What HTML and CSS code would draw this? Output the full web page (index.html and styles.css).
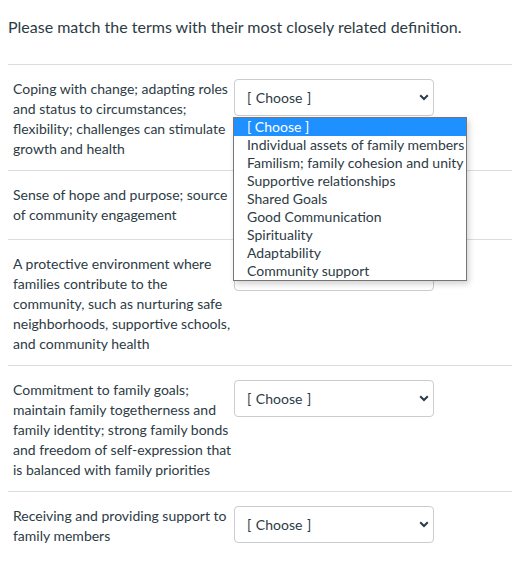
FILE: index.html
```html
<!DOCTYPE html>
<html lang="en">
<head>
<meta charset="utf-8">
<title>Matching question</title>
<link rel="stylesheet" href="styles.css">
</head>
<body>
<div class="question">
  <p class="prompt">Please match the terms with their most closely related definition.</p>
  <div class="matches">
    <div class="row">
      <div class="term">Coping with change; adapting roles and status to circumstances; flexibility; challenges can stimulate growth and health</div>
      <div class="control">
        <div class="select"><span>[ Choose ]</span><svg class="chev" width="10" height="7" viewBox="0 0 10 7"><path d="M1.2 1.3 L5 5 L8.8 1.3" fill="none" stroke="#2d3b45" stroke-width="2"/></svg></div>
        <ul class="menu">
          <li class="active">[ Choose ]</li>
          <li>Individual assets of family members</li>
          <li>Familism; family cohesion and unity</li>
          <li>Supportive relationships</li>
          <li>Shared Goals</li>
          <li>Good Communication</li>
          <li>Spirituality</li>
          <li>Adaptability</li>
          <li>Community support</li>
        </ul>
      </div>
    </div>
    <div class="row">
      <div class="term">Sense of hope and purpose; source of community engagement</div>
      <div class="control">
        <div class="select"><span>[ Choose ]</span><svg class="chev" width="10" height="7" viewBox="0 0 10 7"><path d="M1.2 1.3 L5 5 L8.8 1.3" fill="none" stroke="#2d3b45" stroke-width="2"/></svg></div>
      </div>
    </div>
    <div class="row">
      <div class="term">A protective environment where families contribute to the community, such as nurturing safe neighborhoods, supportive schools, and community health</div>
      <div class="control">
        <div class="select"><span>[ Choose ]</span><svg class="chev" width="10" height="7" viewBox="0 0 10 7"><path d="M1.2 1.3 L5 5 L8.8 1.3" fill="none" stroke="#2d3b45" stroke-width="2"/></svg></div>
      </div>
    </div>
    <div class="row">
      <div class="term">Commitment to family goals; maintain family togetherness and family identity; strong family bonds and freedom of self-expression that is balanced with family priorities</div>
      <div class="control">
        <div class="select"><span>[ Choose ]</span><svg class="chev" width="10" height="7" viewBox="0 0 10 7"><path d="M1.2 1.3 L5 5 L8.8 1.3" fill="none" stroke="#2d3b45" stroke-width="2"/></svg></div>
      </div>
    </div>
    <div class="row">
      <div class="term">Receiving and providing support to family members</div>
      <div class="control">
        <div class="select"><span>[ Choose ]</span><svg class="chev" width="10" height="7" viewBox="0 0 10 7"><path d="M1.2 1.3 L5 5 L8.8 1.3" fill="none" stroke="#2d3b45" stroke-width="2"/></svg></div>
      </div>
    </div>
  </div>
</div>
</body>
</html>
```

FILE: styles.css
```css
html, body {
  margin: 0;
  padding: 0;
  background: #ffffff;
}
body {
  font-family: Lato, "Open Sans", sans-serif;
  font-size: 14px;
  line-height: 20px;
  color: #2d3b45;
  overflow: hidden;
}
.question {
  padding-left: 8px;
}
.prompt {
  margin: 0;
  padding-top: 15px;
  font-size: 16px;
  line-height: 24px;
  height: 49px;
}
.matches {
  display: flex;
  flex-direction: column;
}
.row {
  display: flex;
  align-items: flex-start;
  border-top: 1px solid #dadcde;
  padding: 14px 0 11px 5px;
}
.term {
  width: 219px;
  margin-right: 2px;
}
.control {
  position: relative;
  margin-top: 0;
  margin-bottom: 6px;
}
.select {
  box-sizing: border-box;
  width: 200px;
  height: 37px;
  border: 1px solid #c7cdd1;
  border-radius: 4px;
  background: #fff;
  display: flex;
  align-items: center;
  justify-content: space-between;
  padding: 0 4px 0 12px;
}
.select span {
  line-height: 20px;
  word-spacing: 1px;
}
.chev {
  display: block;
}
.menu {
  position: absolute;
  left: -1px;
  top: 38px;
  width: 234px;
  box-sizing: border-box;
  margin: 0;
  padding: 0;
  list-style: none;
  background: #fff;
  border: 1px solid #767676;
  box-shadow: 2px 3px 6px rgba(0, 0, 0, 0.18);
  z-index: 5;
}
.menu li {
  height: 18px;
  line-height: 18px;
  padding-left: 13px;
  white-space: nowrap;
}
.menu li.active {
  background: #1e90ff;
  color: #ffffff;
}
```
